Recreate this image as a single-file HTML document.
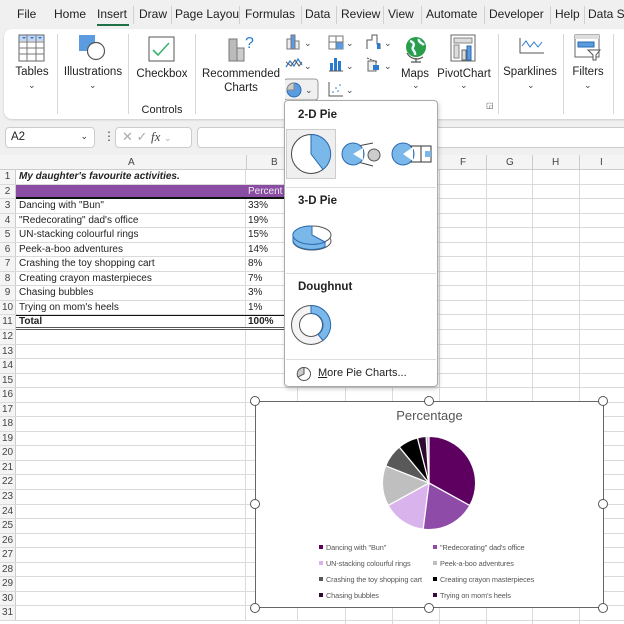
<!DOCTYPE html><html><head><style>
*{margin:0;padding:0;box-sizing:border-box}
body{width:624px;height:624px;overflow:hidden;background:#f0f0f0;font-family:"Liberation Sans",sans-serif;position:relative;color:#222}
.a{position:absolute}
.tab{position:absolute;top:7px;font-size:12px;color:#222;white-space:nowrap}
.tsep{position:absolute;top:6px;width:1px;height:18px;background:#d0d0d0}
.lbl{position:absolute;font-size:11.5px;color:#222;text-align:center;line-height:14px}
.chev{position:absolute;font-size:9px;color:#444}
.gsep{position:absolute;top:34px;width:1px;height:80px;background:#d8d8d8}
.row{height:14.55px;border-bottom:1px solid #dadada;display:flex;font-size:10px;line-height:13.5px}
.rn{width:16px;text-align:center;color:#444;font-size:10px;background:#f4f4f4;border-right:1px solid #ccc}
.ca{width:230px;padding-left:3px;border-right:1px solid #dadada;white-space:nowrap;overflow:hidden}
.cb{width:52px;padding-left:2px;border-right:1px solid #dadada}
.dh{font-size:11.5px;font-weight:bold;color:#222;position:absolute;left:13px}
.hd{position:absolute;width:10px;height:10px;border:1.5px solid #555;border-radius:50%;background:#fff}
.lg{position:absolute;font-size:7.3px;color:#555;white-space:nowrap;letter-spacing:-.1px}
.lg i{display:inline-block;width:4px;height:4px;margin-right:3px;vertical-align:1px}
</style></head><body>
<div class="tab" style="left:17px">File</div>
<div class="tab" style="left:54px">Home</div>
<div class="tab" style="left:97px">Insert</div>
<div class="a" style="left:97px;top:24px;width:32px;height:2px;background:#1e7145"></div>
<div class="tsep" style="left:133px"></div>
<div class="tab" style="left:139px">Draw</div>
<div class="tsep" style="left:171px"></div>
<div class="tab" style="left:175px">Page Layou</div>
<div class="tsep" style="left:239px"></div>
<div class="tab" style="left:245px">Formulas</div>
<div class="tsep" style="left:301px"></div>
<div class="tab" style="left:305px">Data</div>
<div class="tsep" style="left:336px"></div>
<div class="tab" style="left:341px">Review</div>
<div class="tsep" style="left:383px"></div>
<div class="tab" style="left:388px">View</div>
<div class="tsep" style="left:421px"></div>
<div class="tab" style="left:426px">Automate</div>
<div class="tsep" style="left:484px"></div>
<div class="tab" style="left:489px">Developer</div>
<div class="tsep" style="left:550px"></div>
<div class="tab" style="left:555px">Help</div>
<div class="tsep" style="left:584px"></div>
<div class="tab" style="left:588px">Data St</div>
<div class="a" style="left:4px;top:29px;width:630px;height:90px;background:#fff;border-radius:8px;box-shadow:0 1px 2px #ccc"></div>
<svg class="a" style="left:18px;top:34px" width="27" height="28"><rect x="1" y="1" width="25" height="26" fill="#fff" stroke="#666"/><rect x="1" y="1" width="25" height="6" fill="#3a7bd5" opacity=".3"/><path d="M1 8H26M1 14H26M1 20H26M9 1V27M18 1V27" stroke="#777"/><path d="M4 3l2 2 2-2M12 3l2 2 2-2M20 3l2 2 2-2" fill="#2a7bd0"/></svg>
<div class="lbl" style="left:10px;top:65px;width:44px">Tables</div><div class="chev" style="left:28px;top:80px">⌄</div>
<div class="gsep" style="left:57px"></div>
<svg class="a" style="left:78px;top:34px" width="30" height="28"><rect x="1" y="1" width="16" height="16" fill="#5b9be0"/><circle cx="18" cy="17" r="8.5" fill="#fff" stroke="#555" stroke-width="1.2"/></svg>
<div class="lbl" style="left:60px;top:65px;width:66px">Illustrations</div><div class="chev" style="left:89px;top:80px">⌄</div>
<div class="gsep" style="left:128px"></div>
<svg class="a" style="left:148px;top:36px" width="28" height="26"><rect x="1" y="1" width="25" height="24" fill="#fff" stroke="#555"/><path d="M5 14l5 5 11-12" stroke="#3cb371" stroke-width="1.6" fill="none"/></svg>
<div class="lbl" style="left:131px;top:67px;width:62px">Checkbox</div>
<div class="lbl" style="left:131px;top:103px;width:62px;font-size:11px">Controls</div>
<div class="gsep" style="left:195px"></div>
<svg class="a" style="left:228px;top:34px" width="30" height="30"><rect x="1" y="5" width="8" height="22" fill="#bbb" stroke="#777"/><rect x="9" y="14" width="7" height="13" fill="#ccc" stroke="#777"/><text x="17" y="14" font-size="16" fill="#2a7bd0" font-family="Liberation Sans">?</text></svg>
<div class="lbl" style="left:201px;top:67px;width:80px">Recommended<br>Charts</div>
<svg class="a" style="left:285px;top:34px" width="120" height="66" font-size="9" fill="#444">
<rect x="2" y="5" width="4" height="10" fill="#eee" stroke="#777"/><rect x="6" y="1" width="4" height="14" fill="#5b9be0" stroke="#777"/><rect x="10" y="7" width="4" height="8" fill="#eee" stroke="#777"/><text x="19" y="12">⌄</text>
<rect x="44" y="2" width="14" height="13" fill="#fff" stroke="#777"/><rect x="51" y="8" width="7" height="7" fill="#5b9be0"/><path d="M51 2v13M44 8h14" stroke="#777"/><text x="61" y="12">⌄</text>
<path d="M82 15V6h5v-5h5v9h3v5" fill="none" stroke="#555"/><rect x="92" y="9" width="3" height="6" fill="#2a7bd0"/><text x="99" y="12">⌄</text>
<path d="M1 33l4-6 4 5 4-7 4 6" fill="none" stroke="#2a7bd0" stroke-width="1.2"/><path d="M1 28l5 4 4-6 4 6 3-4" fill="none" stroke="#555"/><text x="19" y="35">⌄</text>
<rect x="45" y="29" width="3" height="8" fill="#2a7bd0"/><rect x="49" y="24" width="3" height="13" fill="#2a7bd0"/><rect x="53" y="27" width="3" height="10" fill="#2a7bd0"/><path d="M44 37h14" stroke="#555"/><text x="61" y="35">⌄</text>
<rect x="83" y="27" width="8" height="10" fill="#eee" stroke="#666"/><rect x="88" y="31" width="6" height="5" fill="#2a7bd0"/><path d="M82 24l10 4" stroke="#555" stroke-dasharray="2 1"/><text x="99" y="35">⌄</text>
<rect x="-1" y="45" width="34" height="21" rx="3" fill="#f0f0f0" stroke="#999"/>
<circle cx="9" cy="56" r="7" fill="#5b9be0" stroke="#2a6ab0"/><path d="M9 56V49a7 7 0 0 0-7 7z" fill="#ccc" stroke="#888"/><text x="20" y="59">⌄</text>
<path d="M44 48v14h14" stroke="#555" fill="none"/><circle cx="48" cy="58" r=".8" fill="#2a7bd0"/><circle cx="51" cy="54" r=".8" fill="#2a7bd0"/><circle cx="55" cy="51" r=".8" fill="#2a7bd0"/><circle cx="53" cy="57" r=".8" fill="#2a7bd0"/><text x="61" y="59">⌄</text>
</svg>
<svg class="a" style="left:403px;top:35px" width="26" height="28"><circle cx="13" cy="12" r="10" fill="#2a9d4a"/><path d="M7 6c3 1 5 3 3 6s3 4 2 8M16 4c-1 3 3 4 5 6" stroke="#e8f4ff" stroke-width="2.5" fill="none"/><path d="M4 18a11 11 0 0 0 16 4M13 23v4M8 27h10" stroke="#555" stroke-width="1.2" fill="none"/></svg>
<div class="lbl" style="left:395px;top:67px;width:40px">Maps</div><div class="chev" style="left:412px;top:80px">⌄</div>
<svg class="a" style="left:450px;top:34px" width="28" height="30"><rect x="1" y="1" width="24" height="26" fill="#fff" stroke="#666"/><rect x="4" y="4" width="18" height="5" fill="#ddd" stroke="#888"/><rect x="4" y="11" width="5" height="13" fill="#ddd" stroke="#888"/><rect x="12" y="16" width="4" height="10" fill="#ddd" stroke="#666"/><rect x="17" y="12" width="4" height="14" fill="#5b9be0" stroke="#2a6ab0"/></svg>
<div class="lbl" style="left:433px;top:67px;width:62px">PivotChart</div><div class="chev" style="left:460px;top:80px">⌄</div>
<div class="a" style="left:486px;top:101px;font-size:8px;color:#555">◲</div>
<div class="gsep" style="left:498px"></div>
<svg class="a" style="left:518px;top:36px" width="28" height="20"><path d="M2 2v15h24" stroke="#555" fill="none"/><path d="M4 10l4-5 4 6 4-5 4 5 4-5" stroke="#2a7bd0" fill="none"/></svg>
<div class="lbl" style="left:502px;top:65px;width:56px">Sparklines</div><div class="chev" style="left:527px;top:80px">⌄</div>
<div class="gsep" style="left:563px"></div>
<svg class="a" style="left:574px;top:34px" width="28" height="28"><rect x="1" y="1" width="24" height="22" fill="#fff" stroke="#666"/><rect x="1" y="1" width="24" height="4" fill="#ddd"/><rect x="4" y="8" width="16" height="5" fill="#5b9be0" stroke="#2a6ab0"/><path d="M14 16h12l-4 5v5h-3v-5z" fill="#fff" stroke="#555"/></svg>
<div class="lbl" style="left:568px;top:65px;width:40px">Filters</div><div class="chev" style="left:584px;top:80px">⌄</div>
<div class="gsep" style="left:613px"></div>
<div class="a" style="left:5px;top:127px;width:90px;height:21px;background:#fff;border:1px solid #ccc;border-radius:4px;font-size:11.5px;padding:3px 0 0 5px">A2<span style="position:absolute;right:6px;font-size:9px;color:#333">⌄</span></div>
<div class="a" style="left:103px;top:129px;font-size:12px;color:#444">⋮</div>
<div class="a" style="left:115px;top:127px;width:77px;height:21px;background:#fff;border:1px solid #ccc;border-radius:4px;font-size:13px;color:#aaa;padding:1px 0 0 6px">✕ ✓ <i style="font-family:'Liberation Serif',serif;color:#444">fx</i> <span style="font-size:9px">⌄</span></div>
<div class="a" style="left:197px;top:127px;width:440px;height:21px;background:#fff;border:1px solid #ccc;border-radius:4px"></div>
<div class="a" style="left:0;top:155px;width:624px;height:469px;background:#fff"></div>
<div class="a" style="left:0;top:155px;width:624px;height:15px;background:#f4f4f4;border-bottom:1px solid #ccc"></div>
<div class="a" style="left:128px;top:157px;font-size:10px;color:#444">A</div>
<div class="a" style="left:271px;top:157px;font-size:10px;color:#444">B</div>
<div class="a" style="left:460px;top:157px;font-size:10px;color:#444">F</div>
<div class="a" style="left:506px;top:157px;font-size:10px;color:#444">G</div>
<div class="a" style="left:552px;top:157px;font-size:10px;color:#444">H</div>
<div class="a" style="left:600px;top:157px;font-size:10px;color:#444">I</div>
<div class="a" style="left:246px;top:155px;width:1px;height:15px;background:#ccc"></div>
<div class="a" style="left:486px;top:155px;width:1px;height:15px;background:#ccc"></div>
<div class="a" style="left:532px;top:155px;width:1px;height:15px;background:#ccc"></div>
<div class="a" style="left:579px;top:155px;width:1px;height:15px;background:#ccc"></div>
<div class="a" style="left:0;top:170px;width:624px">
<div class="row"><div class="rn">1</div><div class="ca" style="font-weight:bold;font-style:italic">My daughter's favourite activities.</div><div class="cb"></div></div>
<div class="row"><div class="rn">2</div><div class="ca" style="background:#8a4da3;border:0"></div><div class="cb" style="background:#8a4da3;color:#eee;border:0">Percent</div></div>
<div class="row"><div class="rn">3</div><div class="ca">Dancing with "Bun"</div><div class="cb">33%</div></div>
<div class="row"><div class="rn">4</div><div class="ca">"Redecorating" dad's office</div><div class="cb">19%</div></div>
<div class="row"><div class="rn">5</div><div class="ca">UN-stacking colourful rings</div><div class="cb">15%</div></div>
<div class="row"><div class="rn">6</div><div class="ca">Peek-a-boo adventures</div><div class="cb">14%</div></div>
<div class="row"><div class="rn">7</div><div class="ca">Crashing the toy shopping cart</div><div class="cb">8%</div></div>
<div class="row"><div class="rn">8</div><div class="ca">Creating crayon masterpieces</div><div class="cb">7%</div></div>
<div class="row"><div class="rn">9</div><div class="ca">Chasing bubbles</div><div class="cb">3%</div></div>
<div class="row"><div class="rn">10</div><div class="ca">Trying on mom's heels</div><div class="cb">1%</div></div>
<div class="row"><div class="rn">11</div><div class="ca" style="font-weight:bold">Total</div><div class="cb" style="font-weight:bold">100%</div></div>
<div class="row"><div class="rn">12</div><div class="ca"></div><div class="cb"></div></div>
<div class="row"><div class="rn">13</div><div class="ca"></div><div class="cb"></div></div>
<div class="row"><div class="rn">14</div><div class="ca"></div><div class="cb"></div></div>
<div class="row"><div class="rn">15</div><div class="ca"></div><div class="cb"></div></div>
<div class="row"><div class="rn">16</div><div class="ca"></div><div class="cb"></div></div>
<div class="row"><div class="rn">17</div><div class="ca"></div><div class="cb"></div></div>
<div class="row"><div class="rn">18</div><div class="ca"></div><div class="cb"></div></div>
<div class="row"><div class="rn">19</div><div class="ca"></div><div class="cb"></div></div>
<div class="row"><div class="rn">20</div><div class="ca"></div><div class="cb"></div></div>
<div class="row"><div class="rn">21</div><div class="ca"></div><div class="cb"></div></div>
<div class="row"><div class="rn">22</div><div class="ca"></div><div class="cb"></div></div>
<div class="row"><div class="rn">23</div><div class="ca"></div><div class="cb"></div></div>
<div class="row"><div class="rn">24</div><div class="ca"></div><div class="cb"></div></div>
<div class="row"><div class="rn">25</div><div class="ca"></div><div class="cb"></div></div>
<div class="row"><div class="rn">26</div><div class="ca"></div><div class="cb"></div></div>
<div class="row"><div class="rn">27</div><div class="ca"></div><div class="cb"></div></div>
<div class="row"><div class="rn">28</div><div class="ca"></div><div class="cb"></div></div>
<div class="row"><div class="rn">29</div><div class="ca"></div><div class="cb"></div></div>
<div class="row"><div class="rn">30</div><div class="ca"></div><div class="cb"></div></div>
<div class="row"><div class="rn">31</div><div class="ca"></div><div class="cb"></div></div>
</div>
<div class="a" style="left:16px;top:197px;width:282px;height:2px;background:#111"></div>
<div class="a" style="left:16px;top:314.5px;width:282px;height:1.5px;background:#111"></div>
<div class="a" style="left:16px;top:327px;width:282px;height:3px;border-top:1px solid #555;border-bottom:1px solid #555;background:#fff"></div>
<div class="a" style="left:345px;top:170px;width:1px;height:454px;background:#dadada"></div>
<div class="a" style="left:392px;top:170px;width:1px;height:454px;background:#dadada"></div>
<div class="a" style="left:439px;top:170px;width:1px;height:454px;background:#dadada"></div>
<div class="a" style="left:486px;top:170px;width:1px;height:454px;background:#dadada"></div>
<div class="a" style="left:532px;top:170px;width:1px;height:454px;background:#dadada"></div>
<div class="a" style="left:579px;top:170px;width:1px;height:454px;background:#dadada"></div>
<div class="a" style="left:284px;top:100px;width:154px;height:287px;background:#fff;border:1px solid #aaa;border-radius:4px;box-shadow:1px 2px 4px rgba(0,0,0,.2)">
<div class="dh" style="top:8px">2-D Pie</div>
<div class="a" style="left:1px;top:28px;width:50px;height:50px;background:#efefef;border:1px solid #ccc"></div>
<svg class="a" style="left:0;top:28px" width="152" height="50">
<circle cx="26" cy="25" r="19.5" fill="#fff" stroke="#444"/><path d="M26 25V5.5a19.5 19.5 0 0 1 12 35z" fill="#7ab8ea" stroke="#2a6ab0"/>
<path d="M73 17l15-3M73 33l15 4" stroke="#444"/><circle cx="68" cy="25" r="11" fill="#7ab8ea" stroke="#2a6ab0"/><path d="M68 25l10-6v12z" fill="#fff"/><circle cx="89" cy="26" r="6" fill="#ccc" stroke="#555"/>
<circle cx="118" cy="25" r="11" fill="#7ab8ea" stroke="#2a6ab0"/><path d="M118 25l10-7v14z" fill="#fff"/><rect x="136" y="17" width="10" height="16" fill="#fff" stroke="#333"/><rect x="140" y="22" width="6" height="6" fill="#7ab8ea"/><path d="M125 17h11M125 33h11" stroke="#333"/>
</svg>
<div class="a" style="left:1px;top:86px;width:150px;height:1px;background:#ddd"></div>
<div class="dh" style="top:94px">3-D Pie</div>
<svg class="a" style="left:7px;top:120px" width="45" height="35"><ellipse cx="20" cy="20" rx="19" ry="9" fill="#fff" stroke="#555"/><path d="M1 14v6a19 9 0 0 0 32 6v-6" fill="#7ab8ea" stroke="#2a6ab0"/><ellipse cx="20" cy="14" rx="19" ry="9" fill="#fff" stroke="#555"/><path d="M20 14V5A19 9 0 0 0 4 19a19 9 0 0 0 29 2z" fill="#7ab8ea" stroke="#2a6ab0"/></svg>
<div class="a" style="left:1px;top:172px;width:150px;height:1px;background:#ddd"></div>
<div class="dh" style="top:180px">Doughnut</div>
<svg class="a" style="left:5px;top:202px" width="45" height="45"><circle cx="21" cy="22" r="15.5" fill="none" stroke="#f4f4f4" stroke-width="8"/><circle cx="21" cy="22" r="19.5" fill="none" stroke="#555"/><circle cx="21" cy="22" r="11.5" fill="none" stroke="#555"/><path d="M21 2.5a19.5 19.5 0 0 1 12 35l-5-6A11.5 11.5 0 0 0 21 10.5z" fill="#7ab8ea" stroke="#2a6ab0"/></svg>
<div class="a" style="left:1px;top:258px;width:150px;height:1px;background:#ddd"></div>
<svg class="a" style="left:11px;top:265px" width="16" height="16"><circle cx="8" cy="8" r="6.5" fill="#fff" stroke="#555"/><path d="M8 8V1.5A6.5 6.5 0 0 0 2 11z" fill="#ccc" stroke="#555"/></svg>
<div class="a" style="left:33px;top:266px;font-size:11px;color:#222"><u>M</u>ore Pie Charts...</div>
</div>
<div class="a" style="left:255px;top:401px;width:349px;height:207px;background:#fff;border:1.5px solid #666"></div>
<div class="a" style="left:255px;top:408px;width:349px;text-align:center;font-size:13px;color:#555">Percentage</div>
<svg class="a" style="left:383px;top:437px" width="92" height="92" viewBox="-46 -46 92 92">
<g transform="rotate(-90)" fill="none" stroke-width="46">
<circle r="23" stroke="#5e0060" stroke-dasharray="47.69 200"/>
<circle r="23" stroke="#8e4ba8" stroke-dasharray="27.46 200" stroke-dashoffset="-47.69"/>
<circle r="23" stroke="#d9b3ec" stroke-dasharray="21.68 200" stroke-dashoffset="-75.15"/>
<circle r="23" stroke="#bfbfbf" stroke-dasharray="20.23 200" stroke-dashoffset="-96.83"/>
<circle r="23" stroke="#595959" stroke-dasharray="11.56 200" stroke-dashoffset="-117.06"/>
<circle r="23" stroke="#000" stroke-dasharray="10.12 200" stroke-dashoffset="-128.62"/>
<circle r="23" stroke="#2d0a30" stroke-dasharray="4.34 200" stroke-dashoffset="-138.74"/>
<circle r="23" stroke="#c8b8d0" stroke-dasharray="1.45 200" stroke-dashoffset="-143.08"/>
</g>
<g stroke="#fff" stroke-width="1.3">
<line y2="-47"/><line y2="-47" transform="rotate(118.8)"/><line y2="-47" transform="rotate(187.2)"/><line y2="-47" transform="rotate(241.2)"/><line y2="-47" transform="rotate(291.6)"/><line y2="-47" transform="rotate(320.4)"/><line y2="-47" transform="rotate(345.6)"/><line y2="-47" transform="rotate(356.4)"/>
</g></svg>
<div class="lg" style="left:319px;top:543px"><i style="background:#5e0060"></i>Dancing with "Bun"</div>
<div class="lg" style="left:433px;top:543px"><i style="background:#8e4ba8"></i>"Redecorating" dad's office</div>
<div class="lg" style="left:319px;top:559px"><i style="background:#d9b3ec"></i>UN-stacking colourful rings</div>
<div class="lg" style="left:433px;top:559px"><i style="background:#bfbfbf"></i>Peek-a-boo adventures</div>
<div class="lg" style="left:319px;top:575px"><i style="background:#595959"></i>Crashing the toy shopping cart</div>
<div class="lg" style="left:433px;top:575px"><i style="background:#000"></i>Creating crayon masterpieces</div>
<div class="lg" style="left:319px;top:591px"><i style="background:#2d0a30"></i>Chasing bubbles</div>
<div class="lg" style="left:433px;top:591px"><i style="background:#3a0a40"></i>Trying on mom's heels</div>
<div class="hd" style="left:250px;top:396px"></div><div class="hd" style="left:424px;top:396px"></div><div class="hd" style="left:598px;top:396px"></div>
<div class="hd" style="left:250px;top:499px"></div><div class="hd" style="left:598px;top:499px"></div>
<div class="hd" style="left:250px;top:603px"></div><div class="hd" style="left:424px;top:603px"></div><div class="hd" style="left:598px;top:603px"></div>
</body></html>
